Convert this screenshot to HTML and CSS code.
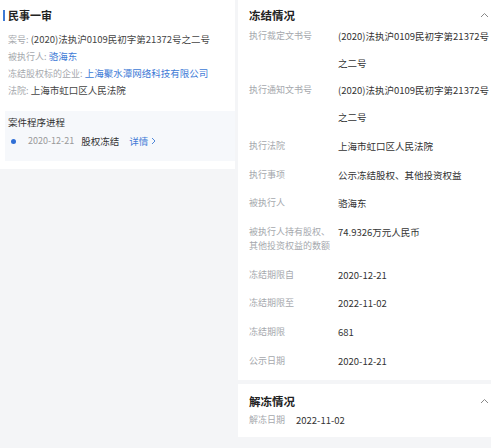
FILE: index.html
```html
<!DOCTYPE html>
<html lang="zh-CN">
<head>
<meta charset="utf-8">
<link rel="stylesheet" href="styles.css">
</head>
<body>
<div class="page">
  <div class="left">
    <div class="case-card">
      <div class="case-title"><span class="bar"></span>民事一审</div>
      <div class="case-lines">
        <div class="line"><span class="k">案号:</span> <span class="v">(2020)法执沪0109民初字第21372号之二号</span></div>
        <div class="line"><span class="k">被执行人:</span> <span class="link">骆海东</span></div>
        <div class="line"><span class="k">冻结股权标的企业:</span> <span class="link">上海聚水潭网络科技有限公司</span></div>
        <div class="line"><span class="k">法院:</span> <span class="v">上海市虹口区人民法院</span></div>
      </div>
      <div class="progress">
        <div class="progress-title">案件程序进程</div>
        <div class="step">
          <span class="dot"></span>
          <span class="date">2020-12-21</span>
          <span class="event">股权冻结</span>
          <span class="link detail">详情<svg class="arrow" width="5" height="8" viewBox="0 0 5 8"><polyline points="1,1 4,4 1,7" fill="none" stroke="#3d7ad6" stroke-width="0.9"/></svg></span>
        </div>
      </div>
    </div>
  </div>
  <div class="right">
    <div class="card freeze">
      <div class="card-head">
        <span class="card-title">冻结情况</span>
        <svg class="chev" width="9" height="6" viewBox="0 0 9 6"><polyline points="1,5 4.5,1.5 8,5" fill="none" stroke="#888" stroke-width="1"/></svg>
      </div>
      <div class="row first"><div class="label">执行裁定文书号</div><div class="value wrap">(2020)法执沪0109民初字第21372号<br>之二号</div></div>
      <div class="row"><div class="label">执行通知文书号</div><div class="value wrap">(2020)法执沪0109民初字第21372号<br>之二号</div></div>
      <div class="row"><div class="label">执行法院</div><div class="value">上海市虹口区人民法院</div></div>
      <div class="row"><div class="label">执行事项</div><div class="value">公示冻结股权、其他投资权益</div></div>
      <div class="row"><div class="label">被执行人</div><div class="value">骆海东</div></div>
      <div class="row"><div class="label">被执行人持有股权、<br>其他投资权益的数额</div><div class="value">74.9326万元人民币</div></div>
      <div class="row"><div class="label">冻结期限自</div><div class="value">2020-12-21</div></div>
      <div class="row"><div class="label">冻结期限至</div><div class="value">2022-11-02</div></div>
      <div class="row"><div class="label">冻结期限</div><div class="value">681</div></div>
      <div class="row"><div class="label">公示日期</div><div class="value">2020-12-21</div></div>
    </div>
    <div class="card unfreeze">
      <div class="card-head">
        <span class="card-title">解冻情况</span>
        <svg class="chev" width="9" height="6" viewBox="0 0 9 6"><polyline points="1,5 4.5,1.5 8,5" fill="none" stroke="#888" stroke-width="1"/></svg>
      </div>
      <div class="inline-row"><span class="label-inline">解冻日期</span><span class="value">2022-11-02</span></div>
    </div>
  </div>
</div>
</body>
</html>
```

FILE: styles.css
```css
* { box-sizing: border-box; }
html, body {
  margin: 0;
  padding: 0;
  background: #f4f5f7;
  font-family: "Noto Sans CJK SC", "Noto Sans", sans-serif;
  color: #333;
}
.page {
  display: flex;
  gap: 3px;
  width: 491px;
  height: 448px;
  overflow: hidden;
}
.left {
  width: 235px;
  flex: none;
}
.case-card {
  background: #fff;
  padding: 7px 0 8px 3px;
}
.case-title {
  display: flex;
  align-items: center;
  font-size: 11px;
  line-height: 16px;
  font-weight: 700;
  color: #222;
}
.bar {
  width: 2px;
  height: 11px;
  background: #3d7ad6;
  margin-right: 3px;
}
.case-lines {
  padding-left: 5px;
  margin-top: 8px;
}
.line {
  font-size: 9.5px;
  line-height: 17px;
  white-space: nowrap;
}
.k { color: #a5a8ad; font-size: 9px; }
.v { color: #444; }
.link { color: #3d7ad6; }
.progress {
  margin-top: 12px;
  margin-left: 2px;
  background: #f6f8fb;
  padding: 4px 0 13px 3px;
}
.progress-title {
  font-size: 9.5px;
  line-height: 14px;
  color: #333;
}
.step {
  display: flex;
  align-items: center;
  margin-top: 5px;
  font-size: 9.5px;
  line-height: 14px;
}
.dot {
  width: 5px;
  height: 5px;
  border-radius: 50%;
  background: #2f6fd6;
  margin-left: 3px;
  margin-right: 12px;
}
.date { color: #999; font-size: 9px; margin-right: 7px; }
.event { color: #333; margin-right: 10px; }
.detail { display: flex; align-items: center; gap: 3px; }
.right {
  flex: 1;
  display: flex;
  flex-direction: column;
  gap: 4px;
}
.card {
  background: #fff;
  padding: 7px 4px 5px 11px;
}
.card-head {
  display: flex;
  justify-content: space-between;
  align-items: center;
  line-height: 16px;
  margin-bottom: -1px;
}
.card-title {
  font-size: 11.5px;
  font-weight: 700;
  color: #222;
}
.row {
  display: flex;
  padding: 7.35px 0;
}
.row.first {
  padding-bottom: 5.5px;
}
.label {
  width: 89px;
  flex: none;
  font-size: 9px;
  line-height: 14px;
  color: #a5a8ad;
}
.value {
  font-size: 9.5px;
  line-height: 14px;
  color: #333;
  white-space: nowrap;
}
.value.wrap {
  line-height: 27px;
  margin: -6.5px 0;
}
.unfreeze {
  padding-top: 9px;
  padding-bottom: 10px;
}
.inline-row {
  display: flex;
  align-items: center;
  margin-top: 5px;
  line-height: 14px;
}
.label-inline {
  font-size: 9px;
  color: #a5a8ad;
  margin-right: 11px;
}
```
